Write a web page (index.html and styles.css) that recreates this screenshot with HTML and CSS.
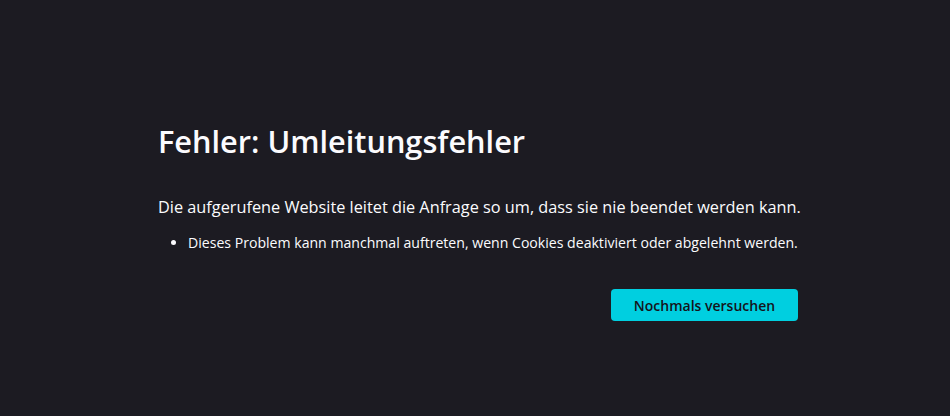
FILE: index.html
```html
<!DOCTYPE html>
<html lang="de">
<head>
<meta charset="utf-8">
<title>Umleitungsfehler</title>
<link rel="stylesheet" href="styles.css">
</head>
<body>
<main class="container">
  <h1 class="title">Fehler: Umleitungsfehler</h1>
  <p class="desc">Die aufgerufene Website leitet die Anfrage so um, dass sie nie beendet werden kann.</p>
  <ul class="list">
    <li>Dieses Problem kann manchmal auftreten, wenn Cookies deaktiviert oder abgelehnt werden.</li>
  </ul>
  <div class="actions">
    <button class="retry">Nochmals versuchen</button>
  </div>
</main>
</body>
</html>
```
FILE: styles.css
```css
html, body {
  margin: 0;
  height: 100%;
  background: #1c1b22;
}
body {
  color: #fbfbfe;
  font-family: "Open Sans", "Noto Sans", sans-serif;
  display: flex;
  justify-content: flex-start;
}
.container {
  width: 640px;
  margin-left: 158px;
  padding-top: 119px;
}
.title {
  margin: 0;
  font-size: 30.7px;
  font-weight: 600;
  line-height: 44px;
}
.desc {
  margin: 32px 0 0;
  font-size: 16.3px;
  line-height: 24px;
  white-space: nowrap;
}
.list {
  margin: 14px 0 0;
  padding-left: 30px;
  font-size: 14.1px;
  line-height: 20px;
  white-space: nowrap;
}
.actions {
  display: flex;
  justify-content: flex-end;
  margin-top: 36px;
}
.retry {
  background: #00cfe0;
  color: #15141a;
  border: none;
  border-radius: 4px;
  height: 32px;
  width: 187px;
  font-family: inherit;
  font-size: 14px;
  font-weight: 600;
}
```
